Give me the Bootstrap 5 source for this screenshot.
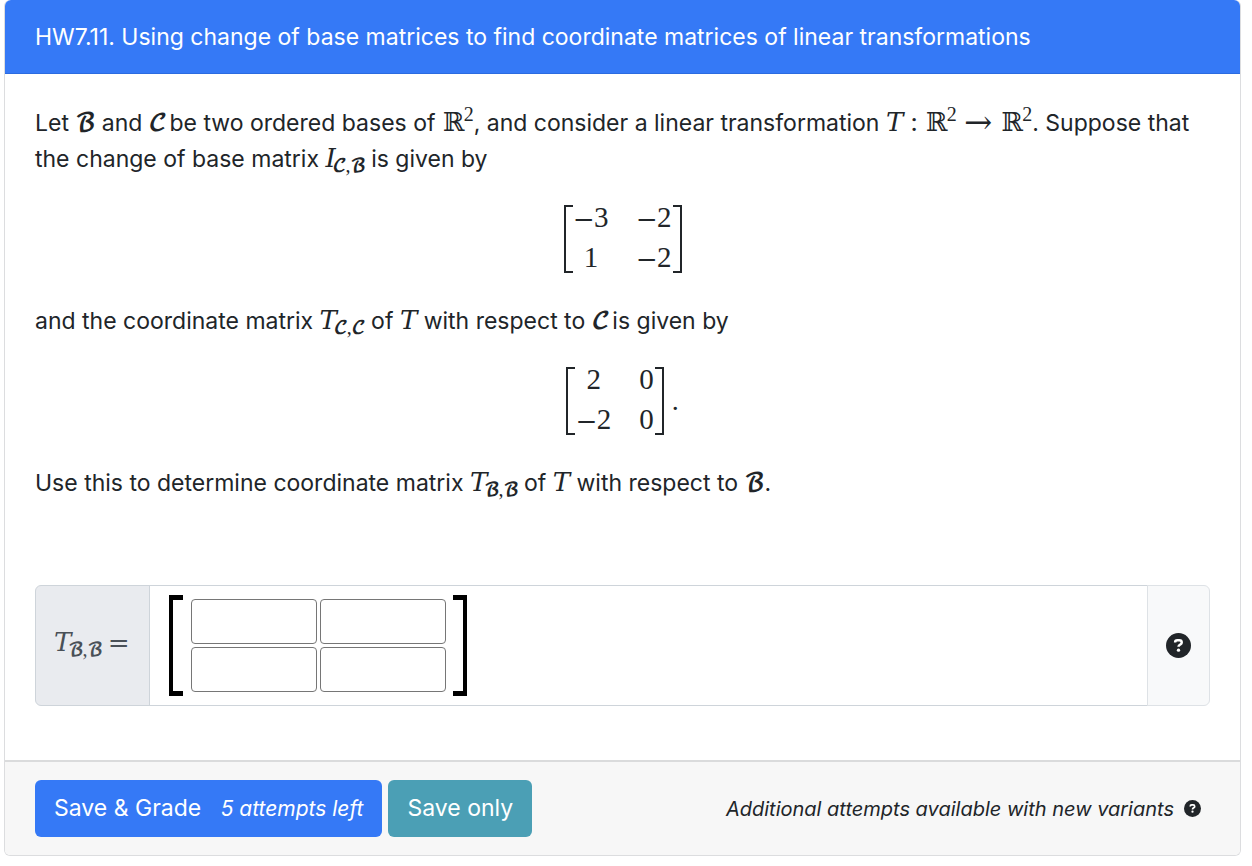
<!DOCTYPE html>
<html lang="en">
<head>
<meta charset="utf-8">
<meta name="viewport" content="width=device-width, initial-scale=1">
<title>HW7.11</title>
<link href="https://cdn.jsdelivr.net/npm/bootstrap@5.3.0/dist/css/bootstrap.min.css" rel="stylesheet">
<style>
  body { font-family: Inter, "Liberation Sans", sans-serif; font-size: 23px; line-height: 36px; color: #212529; }
  .page { padding: 0 11px 0 4px; }
  .question { border-color: #dcdddf; border-top: 0; border-radius: 6px; }
  .question > .card-header { background: #3579f6; color: #fff; padding: 19px 30px 18px; border-bottom: 1px solid #2b6be0; border-radius: 6px 6px 0 0; }
  .question h1 { font-size: 23px; line-height: 36px; font-weight: 400; }
  .question > .card-body { padding: 31px 30px 54px; }
  .question > .card-footer { background: #f7f7f7; padding: 18px 30px; border-top: 2px solid #dadbdc; }
  /* formulas */
  .fx { font-family: "Liberation Serif", serif; font-size: 28px; line-height: 1; white-space: nowrap; }
  .fx i { font-family: "DejaVu Serif", serif; font-size: 26px; font-style: italic; line-height: 1; }
  .cal { font-family: "DejaVu Math TeX Gyre", serif; font-size: 25px; font-weight: 700; line-height: 1; }
  .cal-c { margin-right: -4px; }
  .bb { font-family: "DejaVu Math TeX Gyre", serif; font-size: 26px; line-height: 1; }
  .arrow { font-size: 30px; }
  .fx sub, .fx sup { font-size: 20px; line-height: 1; margin-left: -3px; }
  .fx sub .cal { font-size: 19px; margin-right: -1px; }
  .display { display: flex; justify-content: center; align-items: center; padding: 28px 0 30px; }
  .bracketed { position: relative; display: grid; row-gap: 4px; column-gap: 28px; padding: 0 10px 4px; height: 68px; align-content: center; justify-items: center; font-family: "Liberation Serif", serif; font-size: 29px; line-height: 36px; grid-template-columns: auto auto; }
  .bracketed .bb { line-height: 1; }
  .bracketed::before, .bracketed::after { content: ""; position: absolute; top: 0; bottom: 0; width: 9px; border: 2px solid #212529; }
  .bracketed::before { left: 0; border-right: 0; }
  .bracketed::after { right: 0; border-left: 0; }
  .answer { margin-top: 84px; }
  .answer .input-group-text { border-color: #ced4da; }
  .answer .tag { background: #e9ebef; color: #495057; padding: 0 20px 8px 18px; }
  .field { border: 1px solid #ced4da; border-left: 0; border-right: 0; padding: 9px 20px; }
  .edge { width: 14px; border: solid #000; border-width: 5px 4px; }
  .edge-l { border-right: 0; }
  .edge-r { border-left: 0; }
  .cells { display: grid; grid-template-columns: 126px 126px; gap: 3px; padding: 4px 7px 4px 8px; }
  .cells input { height: 45px; width: 100%; border: 1px solid #767676; border-radius: 4px; background: #fff; padding: 2px 6px; }
  .answer .help { background: #f8f9fa; border: 1px solid #dee2e6; border-radius: 0 6px 6px 0; padding: 0 18px; }
  .acts { gap: 6px; }
  .act { font-size: 23px; line-height: 36px; padding: 10px 19px 11px; border: 0; border-radius: 6px; color: #fff; }
  .act-grade, .act-grade:hover { background: #3579f6; color: #fff; }
  .act-save, .act-save:hover { background: #4b9fb5; color: #fff; }
  .left { font-size: 21px; font-style: italic; line-height: 1; margin-left: 13px; }
  .variants { font-size: 20px; font-style: italic; gap: 10px; padding-right: 9px; }
</style>
</head>
<body>
<main class="page">
  <form class="card question">
    <div class="card-header"><h1 class="m-0">HW7.11. Using change of base matrices to find coordinate matrices of linear transformations</h1></div>
    <div class="card-body">
      <p class="m-0">Let <span class="cal">ℬ</span> and <span class="cal cal-c">𝒞</span> be two ordered bases of <span class="fx"><span class="bb">ℝ</span><sup>2</sup></span>, and consider a linear transformation <span class="fx"><i>T</i> : <span class="bb">ℝ</span><sup>2</sup> <span class="bb arrow">→</span> <span class="bb">ℝ</span><sup>2</sup></span>. Suppose that the change of base matrix <span class="fx"><i>I</i><sub><span class="cal">𝒞</span>,<span class="cal">ℬ</span></sub></span> is given by</p>
      <div class="display"><div class="bracketed"><span><span class="bb">−</span>3</span><span><span class="bb">−</span>2</span><span>1</span><span><span class="bb">−</span>2</span></div></div>
      <p class="m-0">and the coordinate matrix <span class="fx"><i>T</i><sub><span class="cal">𝒞</span>,<span class="cal">𝒞</span></sub></span> of <span class="fx"><i>T</i></span> with respect to <span class="cal cal-c">𝒞</span> is given by</p>
      <div class="display"><div class="bracketed"><span>2</span><span>0</span><span><span class="bb">−</span>2</span><span>0</span></div><span class="fx ps-2">.</span></div>
      <p class="m-0">Use this to determine coordinate matrix <span class="fx"><i>T</i><sub><span class="cal">ℬ</span>,<span class="cal">ℬ</span></sub></span> of <span class="fx"><i>T</i></span> with respect to <span class="cal">ℬ</span>.</p>
      <div class="answer input-group flex-nowrap">
        <span class="input-group-text tag" id="tag"><span class="fx"><i>T</i><sub><span class="cal">ℬ</span>,<span class="cal">ℬ</span></sub> <span class="bb">=</span></span></span>
        <div class="field d-flex flex-grow-1" role="group" aria-labelledby="tag">
          <div class="edge edge-l"></div>
          <div class="cells">
            <input type="text" aria-label="Row 1, column 1"><input type="text" aria-label="Row 1, column 2">
            <input type="text" aria-label="Row 2, column 1"><input type="text" aria-label="Row 2, column 2">
          </div>
          <div class="edge edge-r"></div>
        </div>
        <button type="button" class="btn help d-flex align-items-center" aria-label="Help">
          <svg width="25" height="25" viewBox="0 0 24 24"><circle cx="12" cy="12" r="12" fill="#212529"/><path d="M8.800 9.200V8.700C8.800 7.500 9.700 7 10.800 7h2c1.400 0 2.300.8 2.300 2 0 1-.5 1.500-1.300 2-1.200.7-1.800 1-1.800 2.300" fill="none" stroke="#fff" stroke-width="2.400"/><circle cx="12" cy="16.500" r="1.600" fill="#fff"/></svg>
        </button>
      </div>
    </div>
    <div class="card-footer d-flex align-items-center justify-content-between">
      <div class="d-flex acts">
        <button type="button" class="btn act act-grade">Save &amp; Grade <span class="left">5 attempts left</span></button>
        <button type="button" class="btn act act-save">Save only</button>
      </div>
      <div class="variants d-flex align-items-center">Additional attempts available with new variants
        <button type="button" class="btn border-0 p-0 d-flex" aria-label="About variants">
          <svg width="17" height="17" viewBox="0 0 24 24"><circle cx="12" cy="12" r="12" fill="#212529"/><path d="M8.800 9.200V8.700C8.800 7.500 9.700 7 10.800 7h2c1.400 0 2.300.8 2.300 2 0 1-.5 1.500-1.300 2-1.200.7-1.800 1-1.800 2.300" fill="none" stroke="#fff" stroke-width="2.400"/><circle cx="12" cy="16.500" r="1.600" fill="#fff"/></svg>
        </button>
      </div>
    </div>
  </form>
</main>
<script src="https://cdn.jsdelivr.net/npm/bootstrap@5.3.0/dist/js/bootstrap.bundle.min.js"></script>
</body>
</html>
